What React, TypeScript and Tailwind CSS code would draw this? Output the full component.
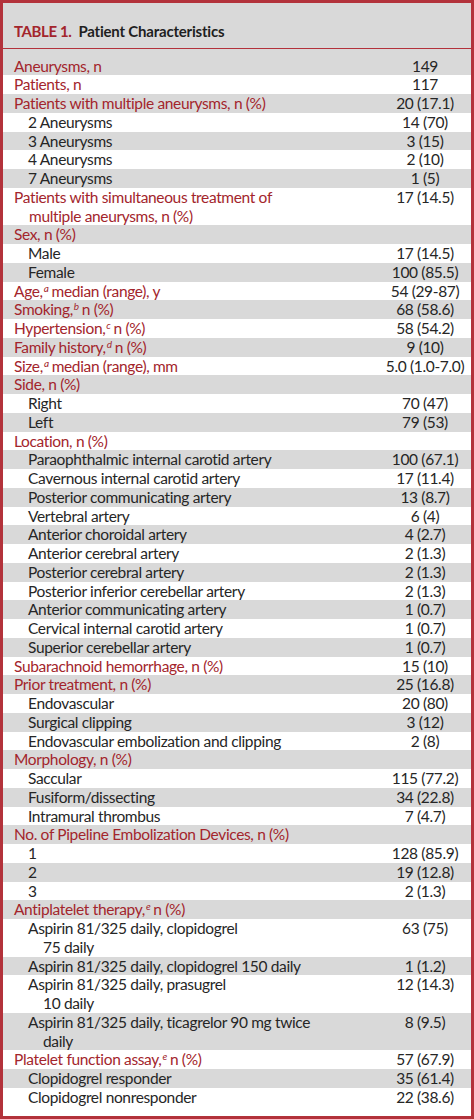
import React from "react";

type Row = {
  label: React.ReactNode[]; // one entry per printed line
  value?: string;
  sub?: boolean;
};

const Sup = ({ c }: { c: string }) => (
  <span className="italic text-[10px] leading-none align-[5px] pl-[1px] pr-[3px]">{c}</span>
);

const rows: Row[] = [
  { label: ["Aneurysms, n"], value: "149" },
  { label: ["Patients, n"], value: "117" },
  { label: ["Patients with multiple aneurysms, n (%)"], value: "20 (17.1)" },
  { label: ["2 Aneurysms"], value: "14 (70)", sub: true },
  { label: ["3 Aneurysms"], value: "3 (15)", sub: true },
  { label: ["4 Aneurysms"], value: "2 (10)", sub: true },
  { label: ["7 Aneurysms"], value: "1 (5)", sub: true },
  {
    label: ["Patients with simultaneous treatment of", "multiple aneurysms, n (%)"],
    value: "17 (14.5)",
  },
  { label: ["Sex, n (%)"] },
  { label: ["Male"], value: "17 (14.5)", sub: true },
  { label: ["Female"], value: "100 (85.5)", sub: true },
  { label: [<>Age,<Sup c="a" />median (range), y</>], value: "54 (29-87)" },
  { label: [<>Smoking,<Sup c="b" />n (%)</>], value: "68 (58.6)" },
  { label: [<>Hypertension,<Sup c="c" />n (%)</>], value: "58 (54.2)" },
  { label: [<>Family history,<Sup c="d" />n (%)</>], value: "9 (10)" },
  { label: [<>Size,<Sup c="a" />median (range), mm</>], value: "5.0 (1.0-7.0)" },
  { label: ["Side, n (%)"] },
  { label: ["Right"], value: "70 (47)", sub: true },
  { label: ["Left"], value: "79 (53)", sub: true },
  { label: ["Location, n (%)"] },
  { label: ["Paraophthalmic internal carotid artery"], value: "100 (67.1)", sub: true },
  { label: ["Cavernous internal carotid artery"], value: "17 (11.4)", sub: true },
  { label: ["Posterior communicating artery"], value: "13 (8.7)", sub: true },
  { label: ["Vertebral artery"], value: "6 (4)", sub: true },
  { label: ["Anterior choroidal artery"], value: "4 (2.7)", sub: true },
  { label: ["Anterior cerebral artery"], value: "2 (1.3)", sub: true },
  { label: ["Posterior cerebral artery"], value: "2 (1.3)", sub: true },
  { label: ["Posterior inferior cerebellar artery"], value: "2 (1.3)", sub: true },
  { label: ["Anterior communicating artery"], value: "1 (0.7)", sub: true },
  { label: ["Cervical internal carotid artery"], value: "1 (0.7)", sub: true },
  { label: ["Superior cerebellar artery"], value: "1 (0.7)", sub: true },
  { label: ["Subarachnoid hemorrhage, n (%)"], value: "15 (10)" },
  { label: ["Prior treatment, n (%)"], value: "25 (16.8)" },
  { label: ["Endovascular"], value: "20 (80)", sub: true },
  { label: ["Surgical clipping"], value: "3 (12)", sub: true },
  { label: ["Endovascular embolization and clipping"], value: "2 (8)", sub: true },
  { label: ["Morphology, n (%)"] },
  { label: ["Saccular"], value: "115 (77.2)", sub: true },
  { label: ["Fusiform/dissecting"], value: "34 (22.8)", sub: true },
  { label: ["Intramural thrombus"], value: "7 (4.7)", sub: true },
  { label: ["No. of Pipeline Embolization Devices, n (%)"] },
  { label: ["1"], value: "128 (85.9)", sub: true },
  { label: ["2"], value: "19 (12.8)", sub: true },
  { label: ["3"], value: "2 (1.3)", sub: true },
  { label: [<>Antiplatelet therapy,<Sup c="e" />n (%)</>] },
  { label: ["Aspirin 81/325 daily, clopidogrel", "75 daily"], value: "63 (75)", sub: true },
  { label: ["Aspirin 81/325 daily, clopidogrel 150 daily"], value: "1 (1.2)", sub: true },
  { label: ["Aspirin 81/325 daily, prasugrel", "10 daily"], value: "12 (14.3)", sub: true },
  {
    label: ["Aspirin 81/325 daily, ticagrelor 90 mg twice", "daily"],
    value: "8 (9.5)",
    sub: true,
  },
  { label: [<>Platelet function assay,<Sup c="e" />n (%)</>], value: "57 (67.9)" },
  { label: ["Clopidogrel responder"], value: "35 (61.4)", sub: true },
  { label: ["Clopidogrel nonresponder"], value: "22 (38.6)", sub: true },
];

export default function App() {
  return (
    <div
      className="w-[474px] h-[1119px] overflow-hidden bg-white border-[3px] border-[#b3323b] flex flex-col text-[15.5px] tracking-[-0.35px] leading-[18.75px] text-[#262626]"
      style={{ fontFamily: "Lato, 'Liberation Sans', sans-serif" }}
    >
      {/* Title */}
      <div className="h-[46px] shrink-0 bg-[#d9d9d9] border-b border-[#b3323b] flex items-center pl-[11px] pt-[12px] font-bold text-[15px] tracking-[-0.2px]">
        <span className="text-[#a3252c] tracking-[-0.4px]">TABLE 1.</span>
        <span className="ml-[7px] text-[#1f1f1f]">Patient Characteristics</span>
      </div>

      {/* Body */}
      <div className="flex flex-col">
        {rows.map((r, i) => (
          <div
            key={i}
            className={`flex ${i % 2 === 0 ? "bg-[#d9d9d9]" : "bg-white"} ${i === 0 ? "pt-[7.6px]" : ""}`}
          >
            <div className={`flex-1 ${r.sub ? "pl-[25px] text-[#262626]" : "pl-[11px] text-[#a3252c]"}`}>
              {r.label.map((line, j) => (
                <div key={j} className={j > 0 ? "pl-[15px]" : ""}>
                  {line}
                </div>
              ))}
            </div>
            <div className="w-[86px] mr-[3px] text-center whitespace-nowrap text-[#262626]">{r.value}</div>
          </div>
        ))}
      </div>
    </div>
  );
}
